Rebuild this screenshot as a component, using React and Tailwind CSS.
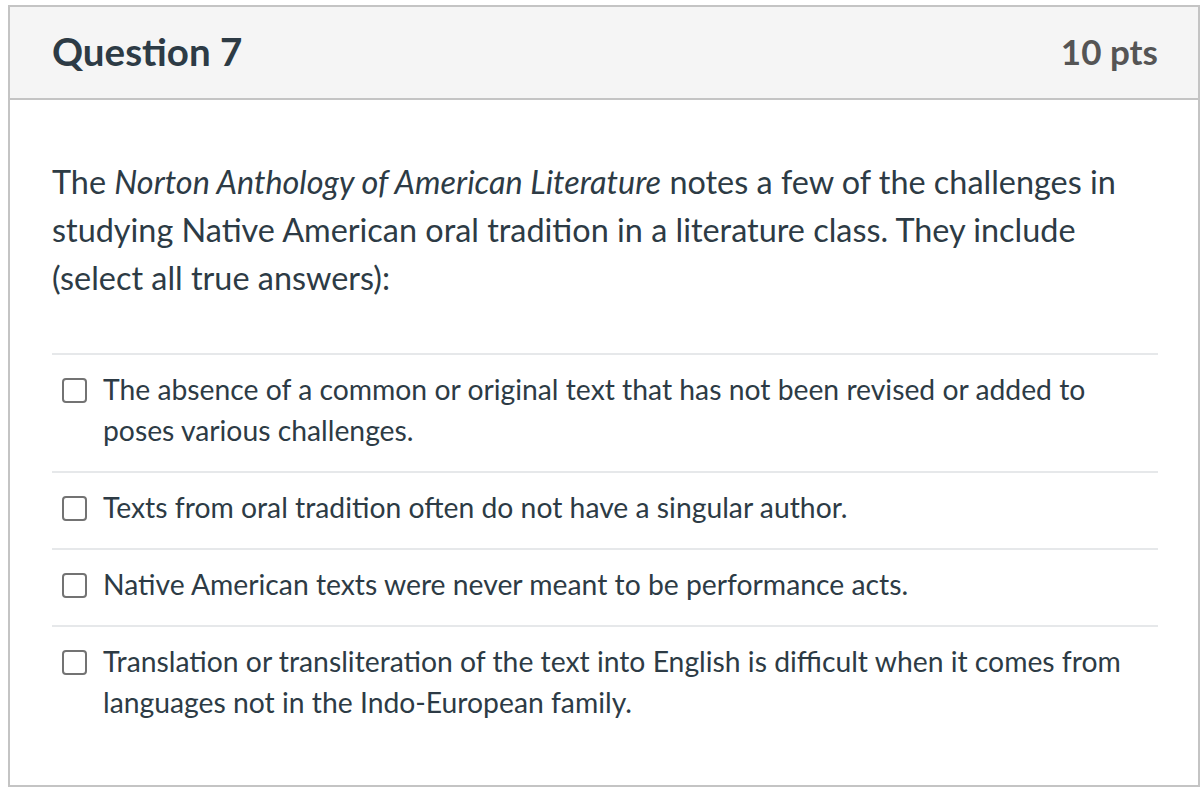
import React from 'react';

const answers = [
  'The absence of a common or original text that has not been revised or added to poses various challenges.',
  'Texts from oral tradition often do not have a singular author.',
  'Native American texts were never meant to be performance acts.',
  'Translation or transliteration of the text into English is difficult when it comes from languages not in the Indo-European family.',
];

// Single answer row with checkbox
const Answer = ({ text }) => (
  <div className="border-t-2 border-[#e6e8ea] pt-[14px] pb-[20px] flex items-start">
    <div className="w-[51px] shrink-0 h-[41px] flex items-center pl-[10px] pt-[2px]">
      <div className="w-[25px] h-[25px] shrink-0 rounded-[4px] border-2 border-[#737373] bg-white" />
    </div>
    <div className="text-[28.3px] leading-[41px] text-[#2d3b45] pr-[30px]">{text}</div>
  </div>
);

export default function App() {
  return (
    <div className="bg-white w-[1204px] h-[793px] pt-[5px] pl-[8px]" style={{ fontFamily: 'Lato, "Noto Sans", sans-serif' }}>
      <div className="w-[1192px] h-[782px] border-2 border-[#c4c4c4] flex flex-col">
        <div className="h-[93px] bg-[#f5f5f5] border-b-2 border-[#c4c4c4] flex items-center justify-between pl-[42px] pr-[40px] pb-[2px]">
          <h2 className="text-[38.5px] font-bold text-[#2d3b45]">Question 7</h2>
          <div className="text-[35px] font-bold text-[#555555]">10 pts</div>
        </div>
        <div className="pl-[42px] pr-[40px] pt-[58px]">
          <p className="text-[32.4px] leading-[48px] text-[#2d3b45] pr-[20px]">
            The <em>Norton Anthology of American Literature</em> notes a few of the challenges in studying Native American oral tradition in a literature class. They include (select all true answers):
          </p>
          <div className="mt-[51px]">
            {answers.map((a) => (
              <Answer key={a} text={a} />
            ))}
          </div>
        </div>
      </div>
    </div>
  );
}
